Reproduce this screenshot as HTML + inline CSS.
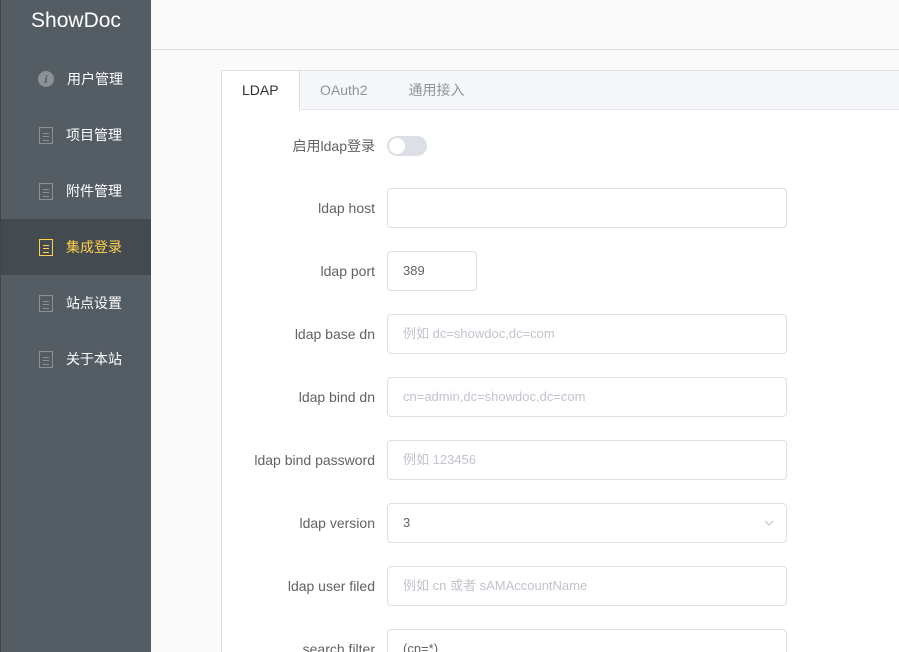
<!DOCTYPE html>
<html><head><meta charset="utf-8"><style>
*{box-sizing:border-box;margin:0;padding:0}
html,body{width:899px;height:652px;overflow:hidden}
body{background:#fafafa;font-family:"Liberation Sans","Noto Sans CJK SC",sans-serif;position:relative}
.side{position:absolute;left:0;top:0;width:151px;height:652px;background:#545c64;border-left:1px solid #3f4448}
.logo{color:#fff;font-size:21px;text-align:center;padding-top:9px;height:51px}
.item{height:56px;display:flex;align-items:center;padding-left:37px;color:#fff;font-size:14px}
.item.act{background:#434a50;color:#ffd04b}
.ic{width:16px;height:16px;margin-right:13px;display:inline-block;position:relative}
.doc{border:1.5px solid #8c9196;width:14px;height:17px;margin-left:1px}
.doc:after{content:"";position:absolute;left:3px;top:5px;width:6px;height:6px;border-top:1px solid #8c9196;border-bottom:1px solid #8c9196}
.doc:before{content:"";position:absolute;left:3px;top:8px;width:6px;border-top:1px solid #8c9196}
.act .doc{border-color:#ffd04b}.act .doc:after,.act .doc:before{border-color:#ffd04b}
.info{background:#8c9196;border-radius:50%;color:#545c64;font:italic bold 12px "Liberation Serif",serif;text-align:center;line-height:16px}
.top{position:absolute;left:151px;top:0;right:0;height:50px;border-bottom:1px solid #e0e0e0;background:#fafafa}
.card{position:absolute;left:221px;top:70px;width:700px;height:600px;background:#fff;border:1px solid #dcdfe6}
.tabs{height:39px;background:#f5f7fa;border-bottom:1px solid #e4e7ed;display:flex;font-size:14px}
.tab{padding:0 20px;line-height:39px;color:#909399}
.tab.a{background:#fff;color:#303133;border-right:1px solid #dcdfe6;height:40px;width:78px}
.tab.b{padding-right:21px}
.row{position:absolute;left:0;display:flex;align-items:center;height:40px}
.lab{width:165px;text-align:right;padding-right:12px;font-size:14px;color:#606266}
.inp{width:400px;height:40px;border:1px solid #dcdfe6;border-radius:4px;padding-left:15px;line-height:38px;font-size:13px;color:#606266}
.ph{color:#c0c4cc}
.sw{width:40px;height:20px;border-radius:10px;background:#dcdfe6;position:relative}
.sw:after{content:"";position:absolute;left:2px;top:2px;width:16px;height:16px;border-radius:50%;background:#fff}
</style></head><body>
<div class="side">
<div class="logo">ShowDoc</div>
<div class="item"><span class="ic info">i</span>用户管理</div>
<div class="item"><span class="ic doc"></span>项目管理</div>
<div class="item"><span class="ic doc"></span>附件管理</div>
<div class="item act"><span class="ic doc"></span>集成登录</div>
<div class="item"><span class="ic doc"></span>站点设置</div>
<div class="item"><span class="ic doc"></span>关于本站</div>
</div>
<div class="top"></div>
<div class="card">
<div class="tabs"><div class="tab a">LDAP</div><div class="tab b">OAuth2</div><div class="tab">通用接入</div></div>
<div class="row" style="top:55px"><div class="lab">启用ldap登录</div><div class="sw"></div></div>
<div class="row" style="top:117px"><div class="lab">ldap host</div><div class="inp"></div></div>
<div class="row" style="top:180px"><div class="lab">ldap port</div><div class="inp" style="width:90px">389</div></div>
<div class="row" style="top:243px"><div class="lab">ldap base dn</div><div class="inp ph">例如 dc=showdoc,dc=com</div></div>
<div class="row" style="top:306px"><div class="lab">ldap bind dn</div><div class="inp ph">cn=admin,dc=showdoc,dc=com</div></div>
<div class="row" style="top:369px"><div class="lab">ldap bind password</div><div class="inp ph">例如 123456</div></div>
<div class="row" style="top:432px"><div class="lab">ldap version</div><div class="inp" style="position:relative">3<svg style="position:absolute;right:12px;top:15px" width="10" height="8" viewBox="0 0 10 8"><path d="M1 2l4 4 4-4" fill="none" stroke="#c0c4cc" stroke-width="1.2"/></svg></div></div>
<div class="row" style="top:495px"><div class="lab">ldap user filed</div><div class="inp ph">例如 cn 或者 sAMAccountName</div></div>
<div class="row" style="top:558px"><div class="lab">search filter</div><div class="inp">(cn=*)</div></div>
</div>
</body></html>
